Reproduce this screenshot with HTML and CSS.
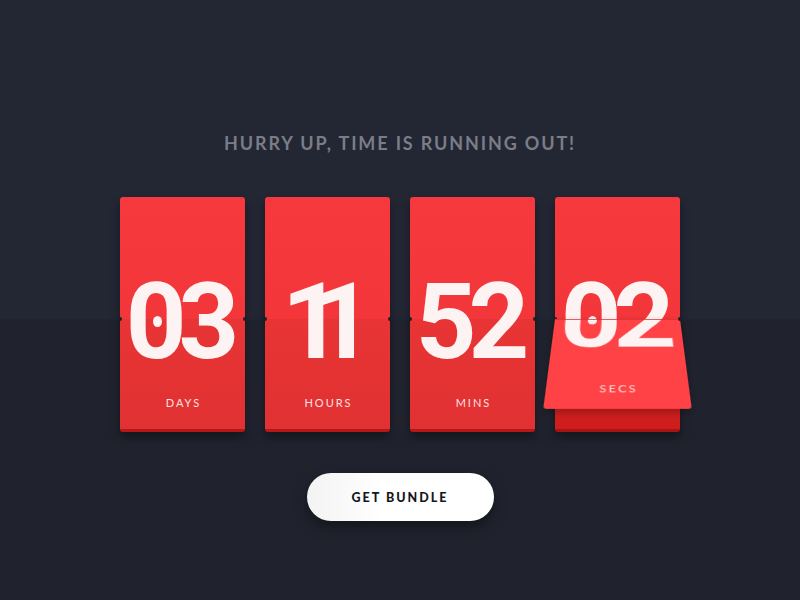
FILE: index.html
```html
<!DOCTYPE html>
<html lang="en">
<head>
  <meta charset="UTF-8" />
  <title>Countdown</title>
  <meta name="viewport" content="width=device-width, initial-scale=1.0" />
  <link rel="stylesheet" href="styles.css">
</head>
<body>
  <div class="page">
    <h1 class="title">HURRY UP, TIME IS RUNNING OUT!</h1>

    <div class="clock">
      <div class="card">
        <div class="num"><span class="zero">0</span>3</div>
        <div class="label">DAYS</div>
      </div>
      <div class="card">
        <div class="num num-ones">11</div>
        <div class="label">HOURS</div>
      </div>
      <div class="card">
        <div class="num">52</div>
        <div class="label">MINS</div>
      </div>

      <!-- seconds card, lower half caught mid-flip -->
      <div class="card card-flipping">
        <div class="num"><span class="zero">0</span>2</div>
        <div class="label">SECS</div>
        <div class="flap">
          <div class="flap-inner">
            <div class="num"><span class="zero">0</span>2</div>
            <div class="label">SECS</div>
          </div>
        </div>
      </div>
    </div>

    <button class="cta" type="button">GET BUNDLE</button>
  </div>
</body>
</html>
```

FILE: styles.css
```css
html, body {
  margin: 0;
  padding: 0;
  height: 100%;
}

body {
  background: linear-gradient(to bottom, #232633 0, #232633 319px, #20232e 320px, #20232d 100%);
  font-family: "Lato", "Open Sans", sans-serif;
  overflow: hidden;
}

.page {
  display: flex;
  flex-direction: column;
  align-items: center;
  padding-top: 130px;
}

.title {
  margin: 0;
  font-size: 18px;
  line-height: 26px;
  font-weight: 700;
  letter-spacing: 1.85px;
  color: #7b7d86;
}

.clock {
  display: flex;
  gap: 20px;
  margin-top: 41px;
}

.card {
  position: relative;
  width: 125px;
  height: 235px;
  border-radius: 3px;
  background: linear-gradient(to bottom,
    #f5393c 0, #f2363a 122px,
    #e83434 122px, #e13132 232px,
    #b51818 232px, #b51818 100%);
  box-shadow: 0 6px 10px rgba(0, 0, 0, 0.35);
  display: flex;
  flex-direction: column;
  align-items: center;
  color: #fdf3f3;
}

/* little notches where the two halves meet */
.card::before,
.card::after {
  content: "";
  position: absolute;
  top: 120px;
  width: 4px;
  height: 4px;
  border-radius: 50%;
  background: #1c1e28;
}
.card::before { left: -2px; }
.card::after { right: -2px; }

.num {
  margin-top: 72px;
  font-family: "Roboto", sans-serif;
  font-weight: 700;
  font-size: 106px;
  line-height: 106px;
  letter-spacing: -8px;
  text-indent: -8px;
  white-space: nowrap;
}

.num-ones {
  letter-spacing: -30px;
  text-indent: -30px;
}

.zero {
  position: relative;
}

/* dotted zero */
.zero::after {
  content: "";
  position: absolute;
  left: 50%;
  top: 50%;
  width: 9px;
  height: 11px;
  margin-left: 1px;
  margin-top: -6px;
  border-radius: 50%;
  background: #fdf3f3;
}

.label {
  margin-top: 21px;
  font-size: 11px;
  line-height: 14px;
  letter-spacing: 2px;
  text-indent: 2px;
  color: #fce1e1;
}

/* the flipping card keeps a darker back under its flap */
.card-flipping {
  background: linear-gradient(to bottom,
    #f5393c 0, #f2363a 122px,
    #d62222 122px, #cf1d1d 232px,
    #a81313 232px, #a81313 100%);
}

.card-flipping > .label {
  visibility: hidden;
}

.flap {
  position: absolute;
  top: 122px;
  left: 0;
  width: 125px;
  height: 113px;
  overflow: hidden;
  border-radius: 0 0 3px 3px;
  background: #fe4245;
  border-top: 1px solid #d83034;
  box-sizing: border-box;
  transform-origin: top center;
  transform: perspective(530px) rotateX(48deg);
  box-shadow: 0 4px 8px rgba(0, 0, 0, 0.25);
}

.flap-inner {
  margin-top: -123px;
  display: flex;
  flex-direction: column;
  align-items: center;
}

.flap .label {
  margin-top: 28px;
}

.cta {
  margin-top: 41px;
  width: 187px;
  height: 48px;
  border: none;
  border-radius: 24px;
  background: linear-gradient(to right, #f3f3f4, #ffffff 40%);
  box-shadow: 0 6px 14px rgba(0, 0, 0, 0.4);
  font-family: "Lato", sans-serif;
  font-weight: 900;
  font-size: 12.5px;
  letter-spacing: 2px;
  color: #15161c;
  padding: 0;
  cursor: pointer;
}
```
